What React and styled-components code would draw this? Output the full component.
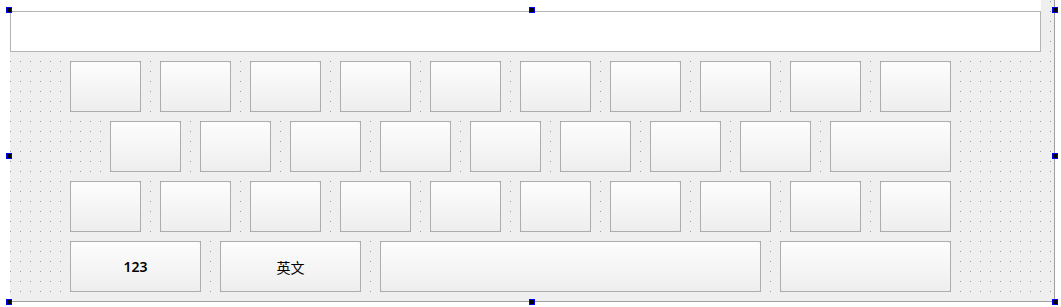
import React from "react";
import styled, { createGlobalStyle } from "styled-components";

const Global = createGlobalStyle`
  html, body { margin: 0; padding: 0; background: #ffffff; }
  body { font-family: "Noto Sans", "Noto Sans CJK SC", sans-serif; }
`;

const Canvas = styled.div`
  position: relative;
  width: 1061px;
  height: 307px;
  overflow: hidden;
  background: #ffffff;
`;

const Form = styled.div`
  margin-left: 10px;
  width: 1045px;
  box-sizing: border-box;
  border-right: 1px solid #a0a0a0;
  border-bottom: 1px solid #a0a0a0;
  background-color: #efefef;
  background-image:
    linear-gradient(to right, transparent 1px, #efefef 1px),
    linear-gradient(to bottom, #9a9a9a 1px, #efefef 1px);
  background-size: 10px 10px;
  background-position: 0 1px, 0 1px;
  display: flex;
  flex-direction: column;
`;

const InputStrip = styled.div`
  width: 1031px;
  padding-top: 11px;
  background: #ffffff;
`;

const LineEdit = styled.div`
  height: 41px;
  box-sizing: border-box;
  border: 1px solid #b4b4b4;
  background: #ffffff;
`;

const Keyboard = styled.div`
  display: flex;
  flex-direction: column;
  gap: 9px;
  padding: 9px 0 9px 60px;
`;

const Row = styled.div`
  display: flex;
  gap: 19px;
  padding-left: ${(p) => p.$indent || 0}px;
`;

const Key = styled.div`
  width: ${(p) => p.$w || 71}px;
  height: 51px;
  box-sizing: border-box;
  border: 1px solid #adadad;
  border-radius: 2px;
  background: linear-gradient(to bottom, #fdfdfd 0%, #f4f4f4 60%, #eeeeee 100%);
  display: flex;
  align-items: center;
  justify-content: center;
  font-family: "Noto Sans", "Noto Sans CJK SC", sans-serif;
  font-size: 14px;
  font-weight: ${(p) => (p.$bold ? 600 : 400)};
  color: #000000;
`;

const Handle = styled.div`
  position: absolute;
  left: ${(p) => p.$x}px;
  top: ${(p) => p.$y}px;
  width: 6px;
  height: 6px;
  box-sizing: border-box;
  border: 1px solid #0000f0;
  background: #000000;
`;

const handles = [
  [6, 7], [529, 7], [1052, 7],
  [6, 153], [1052, 153],
  [6, 299], [529, 299], [1052, 299],
];

export default function App() {
  const ten = Array.from({ length: 10 });
  const eight = Array.from({ length: 8 });
  return (
    <>
      <Global />
      <Canvas>
        <Form>
          <InputStrip>
            <LineEdit />
          </InputStrip>
          <Keyboard>
            <Row>
              {ten.map((_, i) => <Key key={i} />)}
            </Row>
            <Row $indent={40}>
              {eight.map((_, i) => <Key key={i} />)}
              <Key $w={121} />
            </Row>
            <Row>
              {ten.map((_, i) => <Key key={i} />)}
            </Row>
            <Row>
              <Key $w={131} $bold>123</Key>
              <Key $w={141}>英文</Key>
              <Key $w={381} />
              <Key $w={171} />
            </Row>
          </Keyboard>
        </Form>
        {handles.map(([x, y], i) => (
          <Handle key={i} $x={x} $y={y} />
        ))}
      </Canvas>
    </>
  );
}
